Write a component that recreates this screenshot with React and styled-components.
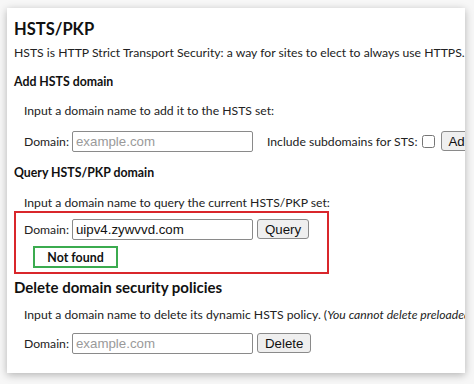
import React from "react";
import styled, { createGlobalStyle, css } from "styled-components";

const GlobalStyle = createGlobalStyle`
  html, body {
    margin: 0;
    padding: 0;
    background: #f7f7f7;
  }
  body {
    font-family: Lato, "Liberation Sans", sans-serif;
    color: #222;
  }
`;

const Page = styled.div`
  width: 474px;
  height: 384px;
  padding: 8px 0 0 7px;
  box-sizing: border-box;
`;

const Card = styled.div`
  width: 458px;
  height: 365px;
  background: #fff;
  box-shadow: 0 2px 8px rgba(0, 0, 0, 0.28);
  overflow: hidden;
  padding: 11px 0 0 7px;
  box-sizing: border-box;
  white-space: nowrap;
`;

const Title = styled.h2`
  margin: ${(p) => p.$gap || 0}px 0 0;
  font-size: ${(p) => p.$size || 16.5}px;
  line-height: 20px;
  font-weight: 700;
  color: #111;
`;

const SubTitle = styled.h3`
  margin: ${(p) => p.$gap || 0}px 0 0;
  font-size: 12.3px;
  line-height: 18px;
  font-weight: 700;
  color: #111;
`;

const Text = styled.p`
  margin: ${(p) => p.$gap || 0}px 0 0;
  padding-left: ${(p) => (p.$indent ? 10 : 0)}px;
  font-size: 12.2px;
  line-height: ${(p) => p.$lh || 18}px;
  color: #222;
  em {
    font-style: italic;
  }
`;

const Row = styled.div`
  display: flex;
  align-items: center;
  height: 24px;
  margin-top: ${(p) => p.$gap || 0}px;
  padding-left: 10px;
`;

const Label = styled.label`
  font-size: 12.2px;
  color: #222;
  margin-right: 3px;
  flex-shrink: 0;
  ${(p) =>
    p.$spaced &&
    css`
      margin-left: 14px;
      margin-right: 4px;
    `}
`;

const Input = styled.input`
  width: 181px;
  height: 21px;
  flex-shrink: 0;
  box-sizing: border-box;
  border: 1px solid #8a8a8a;
  border-radius: 2px;
  padding: 1px 3px;
  font-family: "Liberation Sans", Arial, sans-serif;
  font-size: 13.3px;
  color: #111;
  outline: none;
  &::placeholder {
    color: #9a9a9a;
  }
`;

const Button = styled.button`
  height: 20px;
  margin-left: 4px;
  padding: 0 7px;
  box-sizing: border-box;
  border: 1px solid #8a8a8a;
  border-radius: 3px;
  background: #efefef;
  font-family: "Liberation Sans", Arial, sans-serif;
  font-size: 13.3px;
  color: #111;
  flex-shrink: 0;
`;

const Check = styled.input.attrs({ type: "checkbox" })`
  width: 13px;
  height: 13px;
  margin: 0 2px 0 0;
  flex-shrink: 0;
`;

const QueryBox = styled.div`
  width: 315px;
  height: 63px;
  border: 2px solid #d9262b;
  box-sizing: border-box;
  padding: 4px 0 0;
`;

const QueryRow = styled(Row)`
  padding-left: 8px;
`;

const Status = styled.div`
  width: 85px;
  height: 22px;
  margin: 5px 0 0 17px;
  box-sizing: border-box;
  border: 2px solid #3bab4f;
  display: flex;
  align-items: center;
  justify-content: center;
  font-size: 12.4px;
  font-weight: 700;
  color: #111;
`;

export default function App() {
  return (
    <>
      <GlobalStyle />
      <Page>
        <Card>
          <Title>HSTS/PKP</Title>
          <Text $gap={5}>
            HSTS is HTTP Strict Transport Security: a way for sites to elect to
            always use HTTPS. See https://www.chromium.org/hsts
          </Text>

          <SubTitle $gap={11}>Add HSTS domain</SubTitle>
          <Text $gap={11} $indent>
            Input a domain name to add it to the HSTS set:
          </Text>
          <Row $gap={9}>
            <Label>Domain:</Label>
            <Input placeholder="example.com" />
            <Label $spaced>Include subdomains for STS:</Label>
            <Check />
            <Button>Add</Button>
          </Row>

          <SubTitle $gap={11}>Query HSTS/PKP domain</SubTitle>
          <Text $gap={13} $indent $lh={16}>
            Input a domain name to query the current HSTS/PKP set:
          </Text>
          <QueryBox>
            <QueryRow>
              <Label>Domain:</Label>
              <Input defaultValue="uipv4.zywvvd.com" />
              <Button>Query</Button>
            </QueryRow>
            <Status>Not found</Status>
          </QueryBox>

          <Title $gap={3} $size={15}>
            Delete domain security policies
          </Title>
          <Text $gap={9} $indent>
            Input a domain name to delete its dynamic HSTS policy. (
            <em>You cannot delete preloaded entries.</em>)
          </Text>
          <Row $gap={7}>
            <Label>Domain:</Label>
            <Input placeholder="example.com" />
            <Button>Delete</Button>
          </Row>
        </Card>
      </Page>
    </>
  );
}
